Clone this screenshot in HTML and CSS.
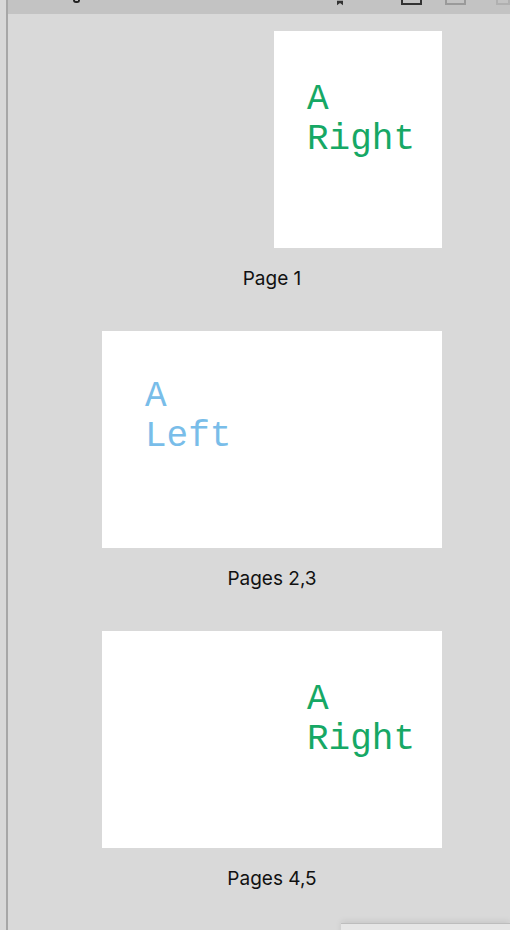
FILE: index.html
```html
<!DOCTYPE html>
<html lang="en">
<head>
  <meta charset="UTF-8">
  <meta name="viewport" content="width=device-width,initial-scale=1">
  <title>Page thumbnails</title>
  <link rel="stylesheet" href="styles.css">
</head>
<body>
  <div class="gutter"></div>
  <div class="panel">
    <!-- toolbar, only its lower edge is visible -->
    <div class="toolbar">
      <span class="tb-glyph"></span>
      <svg class="tb-bookmark" width="8" height="6" viewBox="0 0 8 6"><path d="M0 0H8V6L4 3L0 6Z" fill="#333"/></svg>
      <span class="tb-box dark"></span>
      <span class="tb-box light"></span>
      <span class="tb-box light last"></span>
    </div>

    <div class="pages">
      <div class="item">
        <div class="thumb portrait green"><div class="txt right">A<br>Right</div></div>
        <div class="label">Page 1</div>
      </div>
      <div class="item">
        <div class="thumb blue"><div class="txt left">A<br>Left</div></div>
        <div class="label">Pages 2,3</div>
      </div>
      <div class="item">
        <div class="thumb green"><div class="txt right">A<br>Right</div></div>
        <div class="label">Pages 4,5</div>
      </div>
    </div>

    <div class="popup"></div>
  </div>
</body>
</html>
```

FILE: styles.css
```css
html, body { margin: 0; height: 930px; overflow: hidden; }
body { display: flex; background: #d9d9d9; font-family: "Inter", "Liberation Sans", sans-serif; }
.gutter { width: 6px; background: #d8d8d8; border-right: 2px solid #a7a7a7; flex: none; }
.panel { flex: 1; display: flex; flex-direction: column; position: relative; overflow: hidden; }

.toolbar { height: 14px; background: #c3c3c3; display: flex; align-items: flex-start; flex: none; }
.tb-glyph { width: 8px; height: 3px; margin-left: 65px; border: 2px solid #222; border-top: none; border-radius: 0 0 5px 5px; box-sizing: border-box; }
.tb-bookmark { margin-left: 257px; display: block; }
.tb-box { width: 21px; height: 5px; border: 2px solid #333; border-top: none; box-sizing: border-box; flex: none; }
.tb-box.dark { margin-left: 58px; }
.tb-box.light { border-color: #9a9a9a; margin-left: 23px; }
.tb-box.last { margin-left: 30px; width: 14px; border-color: #b0b0b0; }

.pages { padding: 17px 0 0 94px; }
.item { width: 340px; display: flex; flex-direction: column; align-items: flex-end; height: 300px; }
.thumb { background: #fff; width: 340px; height: 217px; box-sizing: border-box; }
.thumb.portrait { width: 168px; }
.txt { font-family: "Liberation Mono", "Courier New", monospace; font-size: 36px; line-height: 40px; }
.green .txt { color: #16a865; }
.blue .txt { color: #79bde9; }
.txt.right { padding: 49px 0 0 33px; }
.thumb:not(.portrait) .txt.right { padding-left: 205px; }
.txt.left { padding: 46px 0 0 43px; }
.label { align-self: center; margin-top: 20px; font-size: 19px; line-height: 22px; color: #111; }

.popup { position: absolute; left: 333px; right: 0; top: 923px; height: 20px; background: #e6e6e6; border-top: 1px solid #bdbdbd; box-shadow: 0 -2px 6px rgba(0,0,0,0.08); }
```
